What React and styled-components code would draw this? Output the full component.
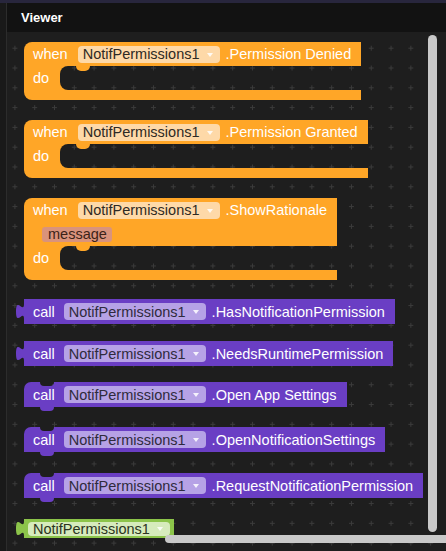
import styled, { createGlobalStyle, css } from "styled-components";

const GlobalStyle = createGlobalStyle`
  html, body {
    margin: 0;
    padding: 0;
    background: #141414;
  }
  body {
    font-family: "Liberation Sans", Arial, sans-serif;
    overflow: hidden;
  }
`;

// blockly style "+" dot grid, fixed to the viewport so slots line up with it
const gridBg = css`
  background-color: #1e1e1e;
  background-image:
    linear-gradient(to right, #1e1e1e 7px, transparent 7px, transparent 12px, #1e1e1e 12px),
    linear-gradient(to bottom, #1e1e1e 7px, transparent 7px, transparent 12px, #1e1e1e 12px),
    linear-gradient(to bottom, transparent 9px, #3b3b3b 9px, #3b3b3b 10px, transparent 10px),
    linear-gradient(to right, transparent 9px, #3b3b3b 9px, #3b3b3b 10px, transparent 10px);
  background-size: 19.8px 19.8px;
  background-position: 5.5px -0.8px;
  background-attachment: fixed;
`;

const ORANGE = "#ffa627";
const PURPLE = "#6a3ec4";
const GREEN = "#8cc44a";

const Frame = styled.div`
  width: 446px;
  height: 551px;
  display: flex;
  flex-direction: column;
`;

const TopStrip = styled.div`
  height: 3px;
  background: #28263d;
`;

const Body = styled.div`
  flex: 1;
  display: flex;
  min-height: 0;
`;

const LeftEdge = styled.div`
  width: 7px;
  background: #191919;
  border-right: 1px solid #2c2c2c;
  box-sizing: border-box;
`;

const Panel = styled.div`
  flex: 1;
  display: flex;
  flex-direction: column;
  min-width: 0;
`;

const Header = styled.div`
  height: 29px;
  display: flex;
  align-items: center;
  padding-left: 14px;
  background: #121212;
  color: #fff;
  font-size: 13px;
  font-weight: bold;
`;

const Workspace = styled.div`
  position: relative;
  flex: 1;
  overflow: hidden;
  ${gridBg};
`;

const Blocks = styled.div`
  display: flex;
  flex-direction: column;
  align-items: flex-start;
  padding: 10px 0 0 17px;
  font-size: 14.5px;
  color: #fff;
  white-space: nowrap;
`;

/* ---------- fields ---------- */

const Field = styled.span`
  display: inline-flex;
  align-items: center;
  height: ${(p) => p.$h || 17}px;
  padding: 0 7px 0 5px;
  border-radius: 4px;
  background: ${(p) => p.$bg};
  color: ${(p) => p.$fg};
`;

const Arrow = styled.span`
  width: 0;
  height: 0;
  margin-left: 7px;
  margin-top: 1px;
  border-left: 3px solid transparent;
  border-right: 3px solid transparent;
  border-top: 4px solid rgba(255, 255, 255, 0.85);
`;

const Label = styled.span`
  margin-right: ${(p) => p.$mr || 0}px;
`;

const Method = styled.span`
  margin-left: 6px;
`;

const Chip = styled.span`
  display: inline-flex;
  align-items: center;
  height: 15px;
  padding: 0 5px 0 6px;
  border-radius: 3px;
  background: #d9937c;
  color: #3c2318;
`;

/* ---------- event blocks ---------- */

const EventBlock = styled.div`
  display: inline-flex;
  flex-direction: column;
  margin-top: ${(p) => p.$mt}px;
  padding-bottom: 10px;
  background: ${ORANGE};
  border-radius: 8px 0 0 8px;
`;

const Row = styled.div`
  display: flex;
  align-items: center;
  height: 24px;
  padding: 0 10px 0 ${(p) => p.$pl || 9}px;
`;

const DoRow = styled.div`
  display: flex;
  height: 24px;
`;

const DoLabel = styled.div`
  width: 36px;
  padding-left: 9px;
  box-sizing: border-box;
  display: flex;
  align-items: center;
`;

const Slot = styled.div`
  position: relative;
  flex: 1;
  border-radius: 8px 0 0 8px;
  ${gridBg};

  &::before {
    content: "";
    position: absolute;
    left: 16px;
    top: 0;
    width: 14px;
    height: 5px;
    background: ${ORANGE};
    border-radius: 0 0 7px 7px;
  }
`;

/* ---------- call / value blocks ---------- */

const CallBlock = styled.div`
  position: relative;
  display: inline-flex;
  align-items: center;
  height: ${(p) => p.$h || 25}px;
  margin-top: ${(p) => p.$mt}px;
  padding: 0 ${(p) => p.$pr ?? 10}px 0 ${(p) => p.$pl ?? 9}px;
  background: ${(p) => p.$bg || PURPLE};
  border-radius: ${(p) => (p.$statement ? "7px 0 0 0" : "0")};

  ${(p) =>
    p.$statement &&
    css`
      &::before {
        content: "";
        position: absolute;
        left: 16px;
        top: 0;
        width: 14px;
        height: 4px;
        border-radius: 0 0 7px 7px;
        ${gridBg};
      }
      &::after {
        content: "";
        position: absolute;
        left: 16px;
        top: 100%;
        width: 14px;
        height: 4px;
        border-radius: 0 0 7px 7px;
        background: ${PURPLE};
      }
    `}
`;

const TabSvg = styled.svg`
  position: absolute;
  left: -8px;
  top: ${(p) => p.$top}px;
`;

const OutputTab = ({ color, top = 5 }) => (
  <TabSvg $top={top} width="8" height="15" viewBox="0 0 8 15">
    <path d="M8 0 C8 10 0 -8 0 7.5 S8 5 8 15 Z" fill={color} />
  </TabSvg>
);

/* ---------- scrollbars ---------- */

const VScroll = styled.div`
  position: absolute;
  right: 9px;
  top: 3px;
  width: 9px;
  height: 497px;
  border-radius: 5px;
  background: #c9c9c9;
`;

const HScroll = styled.div`
  position: absolute;
  left: 158px;
  right: -10px;
  top: 503px;
  height: 8px;
  border-radius: 4px;
  background: #c9c9c9;
`;

const COMPONENT = "NotifPermissions1";

const OrangeField = () => (
  <Field $bg="#fed9a8" $fg="#2e2a24">
    {COMPONENT}
    <Arrow />
  </Field>
);

const PurpleField = () => (
  <Field $bg="#b6a2e6" $fg="#2f2b3d">
    {COMPONENT}
    <Arrow />
  </Field>
);

const events = [
  { name: ".Permission Denied", mt: 0 },
  { name: ".Permission Granted", mt: 20 },
  { name: ".ShowRationale", mt: 20, param: "message" },
];

const calls = [
  { name: ".HasNotificationPermission", mt: 19, value: true },
  { name: ".NeedsRuntimePermission", mt: 17, value: true },
  { name: ".Open App Settings", mt: 16 },
  { name: ".OpenNotificationSettings", mt: 20 },
  { name: ".RequestNotificationPermission", mt: 21 },
];

export default function App() {
  return (
    <>
      <GlobalStyle />
      <Frame>
        <TopStrip />
        <Body>
          <LeftEdge />
          <Panel>
            <Header>Viewer</Header>
            <Workspace>
              <Blocks>
                {events.map((ev) => (
                  <EventBlock key={ev.name} $mt={ev.mt}>
                    <Row>
                      <Label $mr={10}>when</Label>
                      <OrangeField />
                      <Method>{ev.name}</Method>
                    </Row>
                    {ev.param && (
                      <Row $pl={18}>
                        <Chip>{ev.param}</Chip>
                      </Row>
                    )}
                    <DoRow>
                      <DoLabel>do</DoLabel>
                      <Slot />
                    </DoRow>
                  </EventBlock>
                ))}

                {calls.map((c) => (
                  <CallBlock key={c.name} $mt={c.mt} $statement={!c.value}>
                    {c.value && <OutputTab color={PURPLE} />}
                    <Label $mr={9}>call</Label>
                    <PurpleField />
                    <Method>{c.name}</Method>
                  </CallBlock>
                ))}

                <CallBlock $mt={21} $h={19} $bg={GREEN} $pl={4} $pr={4}>
                  <OutputTab color={GREEN} top={2} />
                  <Field $bg="#d6ebbc" $fg="#2b3420" $h={14}>
                    {COMPONENT}
                    <Arrow />
                  </Field>
                </CallBlock>
              </Blocks>
              <VScroll />
              <HScroll />
            </Workspace>
          </Panel>
        </Body>
      </Frame>
    </>
  );
}
